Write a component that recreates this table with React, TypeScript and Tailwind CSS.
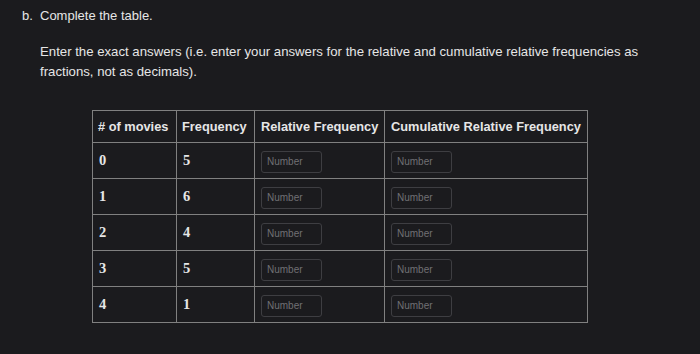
import React from 'react';

const rows = [
  { movies: '0', freq: '5' },
  { movies: '1', freq: '6' },
  { movies: '2', freq: '4' },
  { movies: '3', freq: '5' },
  { movies: '4', freq: '1' },
];

const NumberInput: React.FC = () => (
  <input
    type="text"
    placeholder="Number"
    className="w-[61px] h-[22px] rounded-[3px] border border-[#3e3e42] bg-[#1b1b1e] px-[5px] text-[10px] text-[#ddd] placeholder:text-[#707074] outline-none"
  />
);

export default function App() {
  return (
    <div className="w-[700px] h-[354px] bg-[#1b1b1e] text-[#e6e6e6] font-['Liberation_Sans',Arial,sans-serif] overflow-hidden">
      {/* Question label */}
      <div className="flex pt-[8px] text-[13px] leading-[16px]">
        <span className="w-[40px] pl-[22px]">b.</span>
        <span>Complete the table.</span>
      </div>

      <p className="pl-[40px] pr-[50px] pt-[18px] text-[13.2px] leading-[20px]">
        Enter the exact answers (i.e. enter your answers for the relative and cumulative relative frequencies as fractions, not as decimals).
      </p>

      {/* Data table */}
      <div className="pl-[92px] pt-[28px]">
        <table className="border-collapse table-fixed w-[495px]">
          <colgroup>
            <col className="w-[84px]" />
            <col className="w-[78px]" />
            <col className="w-[130px]" />
            <col className="w-[203px]" />
          </colgroup>
          <thead>
            <tr className="h-[32px] text-[12.8px] font-bold text-left whitespace-nowrap">
              <th className="border border-[#808080] px-[5px]"># of movies</th>
              <th className="border border-[#808080] px-[5px]">Frequency</th>
              <th className="border border-[#808080] px-[6px]">Relative Frequency</th>
              <th className="border border-[#808080] px-[6px]">Cumulative Relative Frequency</th>
            </tr>
          </thead>
          <tbody>
            {rows.map((r) => (
              <tr key={r.movies} className="h-[36px]">
                <td className="border border-[#808080] px-[6px] font-['Liberation_Serif',serif] font-bold text-[14.5px]">{r.movies}</td>
                <td className="border border-[#808080] px-[6px] font-['Liberation_Serif',serif] font-bold text-[14.5px]">{r.freq}</td>
                <td className="border border-[#808080] px-[6px]"><NumberInput /></td>
                <td className="border border-[#808080] px-[6px]"><NumberInput /></td>
              </tr>
            ))}
          </tbody>
        </table>
      </div>
    </div>
  );
}
